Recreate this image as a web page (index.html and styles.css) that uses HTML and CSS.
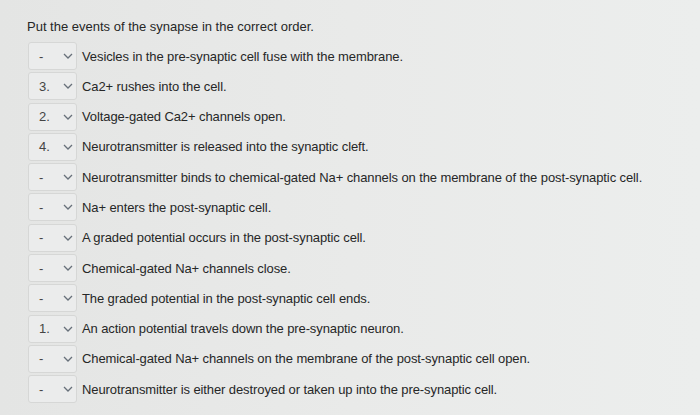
FILE: index.html
```html
<!DOCTYPE html>
<html lang="en">

<head>
    <meta charset="UTF-8">
    <meta name="viewport" content="width=device-width, initial-scale=1.0">
    <title>Synapse Ordering</title>
    <link rel="stylesheet" href="styles.css">
</head>

<body>
    <div class="question">
        <p class="prompt">Put the events of the synapse in the correct order.</p>
        <div class="order-list">
            <div class="order-row">
                <div class="order-select"><span class="choice">-</span><svg class="chevron" viewBox="0 0 10 6"><path d="M1 1 L5 5 L9 1" /></svg></div>
                <span class="event">Vesicles in the pre-synaptic cell fuse with the membrane.</span>
            </div>
            <div class="order-row">
                <div class="order-select"><span class="choice">3.</span><svg class="chevron" viewBox="0 0 10 6"><path d="M1 1 L5 5 L9 1" /></svg></div>
                <span class="event">Ca2+ rushes into the cell.</span>
            </div>
            <div class="order-row">
                <div class="order-select"><span class="choice">2.</span><svg class="chevron" viewBox="0 0 10 6"><path d="M1 1 L5 5 L9 1" /></svg></div>
                <span class="event">Voltage-gated Ca2+ channels open.</span>
            </div>
            <div class="order-row">
                <div class="order-select"><span class="choice">4.</span><svg class="chevron" viewBox="0 0 10 6"><path d="M1 1 L5 5 L9 1" /></svg></div>
                <span class="event">Neurotransmitter is released into the synaptic cleft.</span>
            </div>
            <div class="order-row">
                <div class="order-select"><span class="choice">-</span><svg class="chevron" viewBox="0 0 10 6"><path d="M1 1 L5 5 L9 1" /></svg></div>
                <span class="event">Neurotransmitter binds to chemical-gated Na+ channels on the membrane of the post-synaptic cell.</span>
            </div>
            <div class="order-row">
                <div class="order-select"><span class="choice">-</span><svg class="chevron" viewBox="0 0 10 6"><path d="M1 1 L5 5 L9 1" /></svg></div>
                <span class="event">Na+ enters the post-synaptic cell.</span>
            </div>
            <div class="order-row">
                <div class="order-select"><span class="choice">-</span><svg class="chevron" viewBox="0 0 10 6"><path d="M1 1 L5 5 L9 1" /></svg></div>
                <span class="event">A graded potential occurs in the post-synaptic cell.</span>
            </div>
            <div class="order-row">
                <div class="order-select"><span class="choice">-</span><svg class="chevron" viewBox="0 0 10 6"><path d="M1 1 L5 5 L9 1" /></svg></div>
                <span class="event">Chemical-gated Na+ channels close.</span>
            </div>
            <div class="order-row">
                <div class="order-select"><span class="choice">-</span><svg class="chevron" viewBox="0 0 10 6"><path d="M1 1 L5 5 L9 1" /></svg></div>
                <span class="event">The graded potential in the post-synaptic cell ends.</span>
            </div>
            <div class="order-row">
                <div class="order-select"><span class="choice">1.</span><svg class="chevron" viewBox="0 0 10 6"><path d="M1 1 L5 5 L9 1" /></svg></div>
                <span class="event">An action potential travels down the pre-synaptic neuron.</span>
            </div>
            <div class="order-row">
                <div class="order-select"><span class="choice">-</span><svg class="chevron" viewBox="0 0 10 6"><path d="M1 1 L5 5 L9 1" /></svg></div>
                <span class="event">Chemical-gated Na+ channels on the membrane of the post-synaptic cell open.</span>
            </div>
            <div class="order-row">
                <div class="order-select"><span class="choice">-</span><svg class="chevron" viewBox="0 0 10 6"><path d="M1 1 L5 5 L9 1" /></svg></div>
                <span class="event">Neurotransmitter is either destroyed or taken up into the pre-synaptic cell.</span>
            </div>
        </div>
    </div>
</body>

</html>
```

FILE: styles.css
```css
body {
    margin: 0;
    height: 415px;
    overflow: hidden;
    font-family: "Liberation Sans", Arial, sans-serif;
    font-size: 13px;
    color: #262727;
    background: linear-gradient(90deg, #e4e5e4 0%, #e9eae9 50%, #eceeed 100%);
}

.question {
    padding: 19px 0 0 28px;
}

.prompt {
    margin: 0 0 8px -1px;
}

.order-list {
    display: flex;
    flex-direction: column;
    gap: 2.3px;
}

.order-row {
    display: flex;
    align-items: center;
    gap: 5px;
}

.order-select {
    display: flex;
    align-items: center;
    justify-content: space-between;
    box-sizing: border-box;
    width: 49px;
    height: 28px;
    padding: 0 3px 0 10px;
    border: 1px solid #d6d7d6;
    border-radius: 3px;
    background-color: #ebecec;
}

.choice {
    color: #444;
}

.chevron {
    width: 10px;
    height: 6px;
    fill: none;
    stroke: #67707a;
    stroke-width: 1.3;
}

.event {
    letter-spacing: -0.1px;
}
```
